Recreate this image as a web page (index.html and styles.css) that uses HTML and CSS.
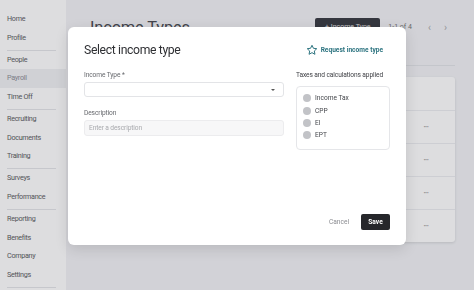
FILE: index.html
```html
<!DOCTYPE html>
<html lang="en">
<head>
    <meta charset="UTF-8">
    <meta name="viewport" content="width=device-width, initial-scale=1.0">
    <title>Income Types</title>
    <link rel="stylesheet" href="styles.css">
</head>
<body>
    <div class="app">
        <nav class="sidebar">
            <div class="nav-group">
                <a class="nav-item">Home</a>
                <a class="nav-item">Profile</a>
            </div>
            <div class="nav-group">
                <a class="nav-item">People</a>
                <a class="nav-item active">Payroll</a>
                <a class="nav-item">Time Off</a>
            </div>
            <div class="nav-group">
                <a class="nav-item">Recruiting</a>
                <a class="nav-item">Documents</a>
                <a class="nav-item">Training</a>
            </div>
            <div class="nav-group">
                <a class="nav-item">Surveys</a>
                <a class="nav-item">Performance</a>
            </div>
            <div class="nav-group">
                <a class="nav-item">Reporting</a>
                <a class="nav-item">Benefits</a>
                <a class="nav-item">Company</a>
                <a class="nav-item">Settings</a>
            </div>
        </nav>

        <main class="main">
            <div class="page-header">
                <h1>Income Types</h1>
                <div class="header-actions">
                    <button class="btn-dark">+ Income Type</button>
                    <span class="pager">1-1 of 4</span>
                    <span class="pager-arrow">&lsaquo;</span>
                    <span class="pager-arrow next">&rsaquo;</span>
                </div>
            </div>

            <div class="table-card">
                <div class="table-head"></div>
                <div class="table-row"><span class="dots">&middot;&middot;&middot;</span></div>
                <div class="table-row"><span class="dots">&middot;&middot;&middot;</span></div>
                <div class="table-row"><span class="dots">&middot;&middot;&middot;</span></div>
                <div class="table-row"><span class="dots">&middot;&middot;&middot;</span></div>
            </div>
        </main>
    </div>

    <div class="overlay"></div>

    <div class="modal">
        <div class="modal-header">
            <h2>Select income type</h2>
            <a class="request-link">
                <svg width="12" height="12" viewBox="0 0 24 24" fill="none" stroke="#2d7480" stroke-width="2" stroke-linejoin="round">
                    <path d="M12 2.5l2.9 6.1 6.6.8-4.9 4.6 1.3 6.6L12 17.3l-5.9 3.3 1.3-6.6-4.9-4.6 6.6-.8z"/>
                </svg>
                Request income type
            </a>
        </div>

        <div class="modal-body">
            <div class="form-col">
                <label class="field-label">Income Type *</label>
                <div class="select">
                    <span class="caret"></span>
                </div>

                <label class="field-label second">Description</label>
                <div class="input">Enter a description</div>
            </div>

            <div class="tax-col">
                <div class="field-label">Taxes and calculations applied</div>
                <ul class="tax-list">
                    <li><span class="dot"></span>Income Tax</li>
                    <li><span class="dot"></span>CPP</li>
                    <li><span class="dot"></span>EI</li>
                    <li><span class="dot"></span>EPT</li>
                </ul>
            </div>
        </div>

        <div class="modal-footer">
            <button class="btn-cancel">Cancel</button>
            <button class="btn-save">Save</button>
        </div>
    </div>
</body>
</html>
```

FILE: styles.css
```css
* {
    box-sizing: border-box;
}
body {
    margin: 0;
    font-family: Roboto, "Noto Sans", sans-serif;
    background: #f2f3f6;
    color: #333;
    overflow: hidden;
}
.app {
    display: flex;
    height: 290px;
}

/* sidebar */
.sidebar {
    width: 66px;
    background: #ffffff;
    padding-top: 10px;
    flex-shrink: 0;
}
.nav-group {
    border-bottom: 1px solid #e4e5e9;
    padding-bottom: 2.5px;
    margin: 0 10px 0 7px;
}
.nav-item {
    display: block;
    height: 18.6px;
    line-height: 18.6px;
    font-size: 7.2px;
    letter-spacing: -0.3px;
    color: #5c5e63;
}
.nav-item.active {
    color: #8d9096;
    background: #f0f1f4;
    margin: 0 -10px 0 -7px;
    padding-left: 7px;
}

/* main page under the modal */
.main {
    flex: 1;
    padding: 18px 19px 0 24px;
}
.page-header {
    display: flex;
    justify-content: space-between;
    align-items: flex-start;
    height: 48px;
    padding-right: 8px;
    border-bottom: 1px solid #e2e4e8;
}
.page-header h1 {
    margin: 0;
    font-size: 16.5px;
    letter-spacing: -0.2px;
    font-weight: 400;
    color: #4a4c52;
    line-height: 20px;
}
.header-actions {
    display: flex;
    align-items: center;
}
.btn-dark {
    background: #3a3c43;
    color: #e6e6e6;
    border: none;
    border-radius: 2px;
    font-family: inherit;
    font-size: 7px;
    height: 18px;
    width: 65px;
    padding: 0;
    margin-right: 8px;
}
.pager {
    font-size: 7px;
    color: #777;
    margin-right: 16px;
}
.pager-arrow {
    font-size: 10px;
    color: #aaa;
}
.pager-arrow.next {
    margin-left: 13px;
}
.table-card {
    margin-top: 11px;
    background: #fff;
    border-radius: 3px;
    box-shadow: 0 1px 3px rgba(0, 0, 0, 0.12);
    height: 165px;
}
.table-head {
    height: 33px;
}
.table-row {
    height: 33px;
    border-top: 1px solid #edeef1;
    display: flex;
    align-items: center;
    justify-content: flex-end;
    padding-right: 27px;
}
.dots {
    font-size: 10px;
    color: #999;
    letter-spacing: -1px;
}

/* overlay + modal */
.overlay {
    position: fixed;
    inset: 0;
    background: rgba(25, 30, 40, 0.15);
}
.modal {
    position: absolute;
    left: 68px;
    top: 27px;
    width: 338px;
    height: 218px;
    background: #fff;
    border-radius: 6px;
    box-shadow: 0 4px 14px rgba(0, 0, 0, 0.12);
    padding: 14px 16px 15px 16px;
    display: flex;
    flex-direction: column;
}
.modal-header {
    display: flex;
    justify-content: space-between;
    align-items: center;
    height: 18px;
}
.modal-header h2 {
    margin: 0;
    font-size: 12.2px;
    letter-spacing: -0.35px;
    font-weight: 400;
    color: #2f3034;
}
.request-link {
    display: flex;
    align-items: center;
    gap: 3px;
    font-size: 6.6px;
    font-weight: 700;
    color: #2d7480;
    margin-right: 7px;
}
.modal-body {
    display: flex;
    gap: 12px;
    margin-top: 11px;
}
.form-col {
    width: 200px;
    display: flex;
    flex-direction: column;
}
.tax-col {
    width: 94px;
}
.field-label {
    font-size: 6.6px;
    letter-spacing: -0.1px;
    line-height: 10px;
    color: #66686d;
    margin-bottom: 2px;
    white-space: nowrap;
}
.tax-col .field-label {
    color: #3f4045;
    margin-bottom: 6px;
}
.field-label.second {
    margin-top: 11px;
}
.select {
    height: 15px;
    border: 1px solid #e3e4e7;
    border-radius: 3px;
    position: relative;
}
.caret {
    position: absolute;
    right: 8px;
    top: 6px;
    border-left: 2px solid transparent;
    border-right: 2px solid transparent;
    border-top: 2px solid #555;
}
.input {
    height: 16px;
    border: 1px solid #ececee;
    border-radius: 3px;
    background: #f7f7f8;
    font-size: 6.6px;
    letter-spacing: -0.1px;
    line-height: 14px;
    padding-left: 4px;
    color: #a8a9ad;
}
.tax-list {
    list-style: none;
    margin: 0;
    padding: 5px 0 7px 6px;
    border: 1px solid #e5e6e9;
    border-radius: 4px;
}
.tax-list li {
    display: flex;
    align-items: center;
    gap: 4px;
    height: 12.4px;
    font-size: 6.6px;
    color: #44464b;
}
.dot {
    width: 8px;
    height: 8px;
    border-radius: 50%;
    background: #c2c3c7;
}
.modal-footer {
    margin-top: auto;
    display: flex;
    justify-content: flex-end;
    align-items: center;
    gap: 12px;
}
.btn-cancel {
    background: none;
    border: none;
    font-family: inherit;
    font-size: 6.6px;
    color: #8a8b90;
    padding: 0;
}
.btn-save {
    background: #26272b;
    color: #fff;
    border: none;
    border-radius: 2px;
    font-family: inherit;
    font-size: 6.6px;
    font-weight: 700;
    width: 29px;
    height: 16px;
    padding: 0;
}
```
